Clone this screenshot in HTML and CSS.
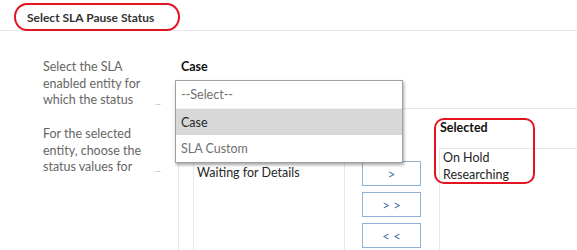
FILE: index.html
```html
<!DOCTYPE html>
<html lang="en">
  <head>
    <meta charset="UTF-8" />
    <title>Select SLA Pause Status</title>
    <link rel="stylesheet" href="styles.css">
  </head>
  <body>
    <header class="title-bar">
      <h1 class="title">Select SLA Pause Status</h1>
    </header>

    <section class="form">
      <div class="row row-entity">
        <div class="label">Select the SLA enabled entity for which the status</div>
        <div class="more">...</div>
        <div class="field">
          <div class="field-name">Case</div>
          <div class="dropdown">
            <div class="option placeholder">--Select--</div>
            <div class="option active">Case</div>
            <div class="option muted">SLA Custom</div>
          </div>
        </div>
        <div class="field-end"></div>
      </div>

      <div class="row row-status">
        <div class="label">For the selected entity, choose the status values for</div>
        <div class="more">...</div>
        <div class="field picker">
          <div class="list-col available-col">
            <div class="col-head">Available</div>
            <div class="list-box">
              <div class="item">In Progress</div>
              <div class="item">Waiting for Details</div>
            </div>
          </div>
          <div class="buttons">
            <button class="move">&gt;</button>
            <button class="move">&gt; &gt;</button>
            <button class="move">&lt; &lt;</button>
          </div>
          <div class="list-col selected-col">
            <div class="col-head">Selected</div>
            <div class="list-box">
              <div class="item">On Hold</div>
              <div class="item">Researching</div>
            </div>
            <div class="mark"></div>
          </div>
        </div>
      </div>
    </section>
  </body>
</html>
```

FILE: styles.css
```css
* {
  box-sizing: border-box;
}

:root {
  --line: #e8e8e8;
  --red: #e3141f;
  --text: #262626;
  --label: #666666;
  --btn: #8fb2d6;
}

body {
  margin: 0;
  height: 250px;
  overflow: hidden;
  font-family: Lato, "Noto Sans", sans-serif;
  font-size: 12.5px;
  color: var(--text);
  background: #fff;
}

.title-bar {
  display: flex;
  padding-top: 3px;
  height: 31px;
  border-bottom: 1px solid var(--line);
}

.title {
  margin: 0 0 0 14px;
  padding: 0 11px;
  width: 166px;
  height: 28px;
  white-space: nowrap;
  font-size: 12px;
  font-weight: 700;
  line-height: 25px;
  color: #333;
  border: 2px solid var(--red);
  border-radius: 13px / 14px;
}

.row {
  display: flex;
  padding-left: 43px;
}

.row-entity {
  height: 78px;
  padding-top: 28px;
}

.row-status {
  height: 142px;
}

.label {
  flex: none;
  width: 112px;
  height: 50px;
  line-height: 16.5px;
  color: var(--label);
}

.row-status .label {
  margin-top: 17px;
}

.more {
  flex: none;
  width: 21px;
  padding-top: 38px;
  font-size: 8px;
  color: #999;
}

.row-status .more {
  padding-top: 55px;
}

.field {
  position: relative;
  flex: 1;
}

.row-entity .field {
  flex: none;
  width: 226px;
  margin-top: -28px;
  padding-top: 28px;
  border-bottom: 1px solid var(--line);
}

.field-end {
  flex: 1;
  margin-top: -28px;
  border-bottom: 1px solid var(--line);
  background: linear-gradient(to right, transparent 71px, #fff 71px, #fff 73px, transparent 73px);
}

.field-name {
  padding-left: 5px;
  font-weight: 700;
  line-height: 16px;
  color: #111;
}

.dropdown {
  position: absolute;
  z-index: 2;
  left: -1px;
  top: 49px;
  width: 228px;
  background: #fff;
  border: 1px solid #a0a0a0;
  box-shadow: 1px 2px 3px rgba(0, 0, 0, 0.35);
}

.option {
  height: 27px;
  padding-left: 5px;
  line-height: 27px;
  color: #707070;
}

.option.active {
  color: var(--text);
  background: #d8d8d8;
  border-top: 1px solid #f0f0f0;
}

.picker {
  display: flex;
  margin-left: 2px;
  padding: 10px 0 0 14px;
  border-left: 1px solid var(--line);
}

.list-col {
  flex: none;
  width: 152px;
  display: flex;
  flex-direction: column;
}

.col-head {
  height: 29px;
  padding-left: 1px;
  font-weight: 700;
  line-height: 18px;
  color: #111;
}

.list-box {
  flex: 1;
  padding: 0 3px;
  border: 1px solid var(--line);
  border-bottom: 0;
}

.available-col .col-head {
  height: 27px;
}

.item {
  line-height: 17px;
  color: var(--text);
}

.buttons {
  flex: none;
  display: flex;
  flex-direction: column;
  gap: 6px;
  width: 59px;
  margin-left: 17px;
  padding-top: 42px;
}

.move {
  height: 25px;
  padding: 0;
  font-family: inherit;
  font-size: 13px;
  color: #3d6fa3;
  background: #fff;
  border: 1px solid var(--btn);
  border-radius: 0;
}

.selected-col {
  position: relative;
  flex: 1;
  margin-left: 18px;
}

.selected-col .list-box {
  border-right: 0;
}

.mark {
  position: absolute;
  left: -5px;
  top: -1px;
  width: 101px;
  height: 66px;
  border: 2px solid var(--red);
  border-radius: 10px;
}
```
